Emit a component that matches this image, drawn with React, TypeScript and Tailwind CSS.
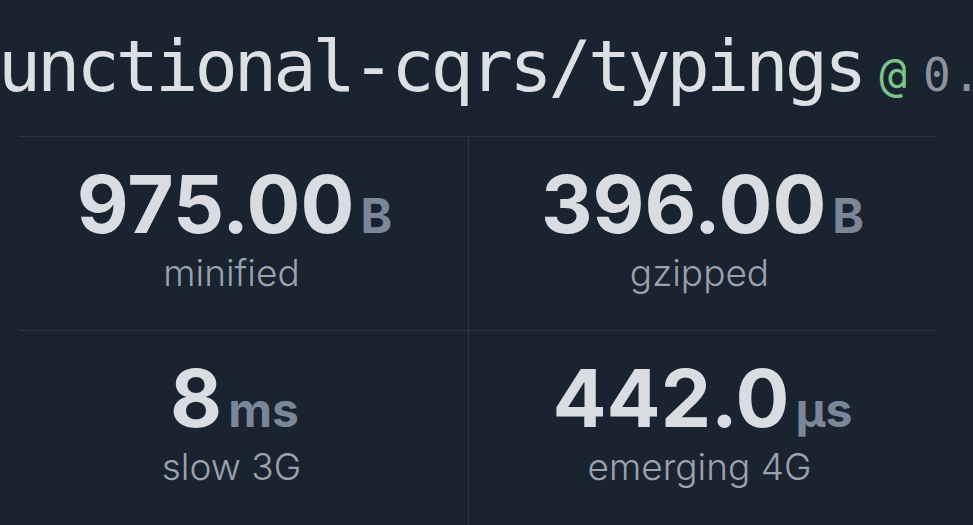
const stats = [
  { value: "975.00", unit: "B", label: "minified" },
  { value: "396.00", unit: "B", label: "gzipped" },
  { value: "8", unit: "ms", label: "slow 3G" },
  { value: "442.0", unit: "µs", label: "emerging 4G" },
]

function Stat({ value, unit, label }: { value: string; unit: string; label: string }) {
  return (
    <div className="flex flex-col items-center">
      <div className="flex items-baseline leading-none">
        <span className="text-[80px] font-bold text-[#d9dce1]">{value}</span>
        <span className="ml-[6px] text-[48px] font-bold text-[#7b8798]">{unit}</span>
      </div>
      <div className="mt-[10px] pr-[6px] text-[37px] leading-none font-light text-[#9aa2ad]">{label}</div>
    </div>
  )
}

export default function App() {
  return (
    <div className="min-h-screen overflow-hidden bg-[#1a2330] font-['Inter',sans-serif]">
      <div className="h-[136px] overflow-hidden whitespace-nowrap pt-[30px]">
        <h1 className="-ml-[81px] flex items-baseline font-['DejaVu_Sans_Mono','Liberation_Mono',monospace] leading-none">
          <span className="text-[72px] tracking-[-4px] text-[#dcdfe4]">@functional-cqrs/typings</span>
          <span className="ml-[16px] text-[46px] tracking-[2px] text-[#8a939e]">
            <span className="text-[#7cc58a]">@</span>
            <span className="ml-[14px]">0.1.0</span>
          </span>
        </h1>
      </div>

      <div className="mx-[19px] grid w-[917px] grid-cols-[450px_467px] border-t border-[#2b3543]">
        <div className="h-[194px] border-r border-b border-[#2b3543] pr-[18px] pt-[27px]">
          <Stat {...stats[0]} />
        </div>
        <div className="h-[194px] border-b border-[#2b3543] pt-[27px]">
          <Stat {...stats[1]} />
        </div>
        <div className="h-[200px] border-r border-[#2b3543] pr-[18px] pt-[27px]">
          <Stat {...stats[2]} />
        </div>
        <div className="h-[200px] pt-[27px]">
          <Stat {...stats[3]} />
        </div>
      </div>
    </div>
  )
}
